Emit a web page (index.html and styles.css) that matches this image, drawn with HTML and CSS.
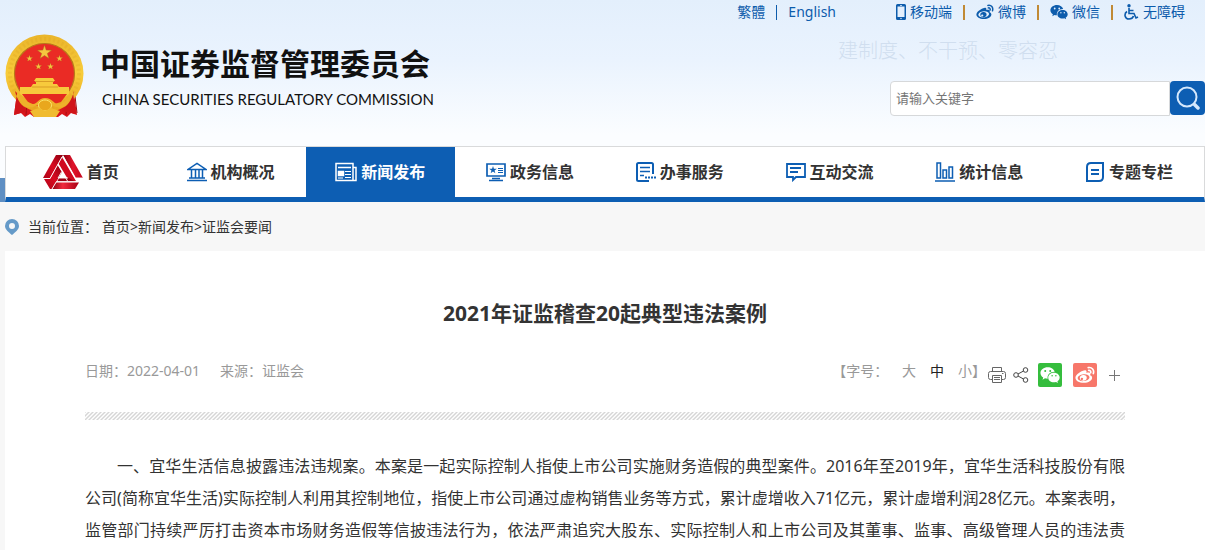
FILE: index.html
```html
<!DOCTYPE html>
<html lang="zh-CN">
<head>
<meta charset="utf-8">
<title>2021年证监稽查20起典型违法案例</title>
<link rel="stylesheet" href="styles.css">
</head>
<body>
<svg class="defs" aria-hidden="true">
  <symbol id="weibo" viewBox="0 0 18 16">
    <path fill="currentColor" fill-rule="evenodd" d="M7.2 4.2c1.200-.7 3-.9 3.200.8 0 .5-.2.900-.2 1.100 1.200-.5 3-.7 3.500.5.3.8-.1 1.400-.2 1.600 1 .3 1.900 1 1.900 2.200 0 2.300-3.300 4.600-7.500 4.600C3.700 15 .4 13.200.4 10.500c0-2.300 3.400-5.100 6.800-6.300zM7.800 7.300c-3.300.2-5.500 2-5.400 3.700.2 1.700 2.600 2.800 5.600 2.500 3-.3 5.200-2 5-3.700-.2-1.700-2.300-2.700-5.200-2.500zM7.300 8.100c1.800-.3 3.300.8 3.300 2.300s-1.400 2.800-3.200 2.800-3.100-1-3.100-2.500 1.300-2.400 3-2.600zM6.200 10.400a1.100 1.100 0 1 0 .1 2.200 1.100 1.100 0 0 0-.1-2.200z"/>
    <path fill="none" stroke="currentColor" stroke-width="1.500" stroke-linecap="round" d="M11.900 1.400c3.400-.7 5.600 2 4.600 5.300M12.300 3.900c1.400-.2 2.200.8 1.800 2.100"/>
  </symbol>
  <symbol id="wechat" viewBox="0 0 18 16">
    <path fill="currentColor" fill-rule="evenodd" d="M7 1C3.300 1 .4 3.300.4 6.200c0 1.700 1 3.100 2.500 4.100l-.6 1.900 2.200-1.200c.8.200 1.500.3 2.400.300C6.300 7.800 9 5 13.200 5.100 12.600 2.700 10 1 7 1zM4.700 3.600a.9.900 0 1 1 0 1.800.9.900 0 0 1 0-1.800zm4.500 0a.9.900 0 1 1 0 1.800.9.900 0 0 1 0-1.800z"/>
    <path fill="currentColor" fill-rule="evenodd" d="M12.600 5.900c3 0 5.100 2 5.100 4.300 0 1.400-.8 2.600-2 3.400l.4 1.600-1.700-.9c-4 1-7-1.200-7-4.100 0-2.400 2.300-4.300 5.200-4.300zM10.900 8a.7.700 0 1 0 0 1.400.7.700 0 0 0 0-1.400zm3.400 0a.7.700 0 1 0 0 1.400.7.700 0 0 0 0-1.400z"/>
  </symbol>
  <symbol id="star" viewBox="-10 -10 20 20"><path d="M0-10 2.300-3.200 9.500-3.100 3.800 1.200 5.900 8.100 0 4-5.900 8.100-3.800 1.200-9.500-3.100-2.300-3.200z"/></symbol>
</svg>

<header class="header">
  <div class="top-links">
    <div class="languages"><a href="#">繁體</a><i class="bar"></i><a href="#">English</a></div>
    <div class="services">
      <a href="#"><svg width="10" height="16" viewBox="0 0 10 16"><path fill="currentColor" fill-rule="evenodd" d="M1.500 0h7A1.500 1.500 0 0 1 10 1.500v13a1.500 1.500 0 0 1-1.500 1.500h-7A1.500 1.500 0 0 1 0 14.500v-13A1.500 1.500 0 0 1 1.500 0zM1.500 2.500v10.500h7V2.500zM4 1v.7h2V1zM5 13.800a.7.700 0 1 0 0 1.400.7.700 0 0 0 0-1.400z"/></svg>移动端</a>
      <i class="bar gold"></i>
      <a href="#"><svg width="18" height="16"><use href="#weibo"/></svg>微博</a>
      <i class="bar gold"></i>
      <a href="#"><svg width="18" height="16"><use href="#wechat"/></svg>微信</a>
      <i class="bar gold"></i>
      <a href="#"><svg width="15" height="16" viewBox="0 0 15 16"><circle cx="5" cy="1.800" r="1.700" fill="currentColor"/><path d="M5 4v5.500h5l2 4.500 2-1M5.500 6.500h4M3 7.500C-.5 10 1 15 5 15c2.300 0 4-1.300 4.500-3" fill="none" stroke="currentColor" stroke-width="1.600"/></svg>无障碍</a>
    </div>
  </div>
  <div class="masthead">
    <a class="brand" href="#">
      <svg class="emblem" width="80" height="84" viewBox="0 0 80 84" role="img" aria-label="国徽">
        <defs><linearGradient id="gold" x2="0" y2="1"><stop stop-color="#eab52b"/><stop offset=".5" stop-color="#f8cc3a"/><stop offset="1" stop-color="#e8a51e"/></linearGradient></defs>
        <path d="M12 59 9 81l7-2 4 4 5-3 4 3h24l4-3 5 3 4-4 6 2-3-22z" fill="#d9161c"/>
        <path d="M14 62 12 79M18 64l-1 14M22 67l-1 14M62 67l-1 14M66 64v14M70 62l2 17" stroke="#a60d12"/>
        <circle cx="39.500" cy="39.500" r="39" fill="url(#gold)"/>
        <circle cx="39.500" cy="39.500" r="34.500" fill="none" stroke="#d89a1c" stroke-width="4" stroke-dasharray="2 2.500" opacity=".22"/>
        <circle cx="39.500" cy="39.500" r="30" fill="#ea2b25" stroke="#b9781a" stroke-width="1.200"/>
        <g fill="#f5c640" stroke="#a8641c" stroke-width=".6"><use href="#star" x="32" y="11" width="15" height="15"/><use href="#star" x="21" y="21" width="7" height="7"/><use href="#star" x="51" y="21" width="7" height="7"/><use href="#star" x="30" y="29" width="7" height="7"/><use href="#star" x="42" y="29" width="7" height="7"/></g>
        <path d="M31 44h17l2 3h-2v3h4l2 3h10v7l-4 3H19l-4-3v-7h11l2-3h3v-3h-2z" fill="#f7ca3c"/>
        <path d="M27 53h26M30 47.500h19" stroke="#d99d25"/>
        <path d="M17 60h45l-6 8-10 3-6-3-8 4-9-4z" fill="#e52a20"/>
        <path d="M10 57c2 9 7 15 12 20l-13 4 3-22zM69 57c-2 9-7 15-12 20l14 3-3-21z" fill="#d0141a"/>
        <path d="M14 60c5 3 8 10 14 10 5 0 5-6 12-6 8 0 8 6 13 6 7 0 9-7 13-10l-1 6c-6 9-10 8-14 7-5-3-18-3-23 0-5 1-10 1-14-8z" fill="#eeb12a"/>
        <path d="M34 69c3-4 9-4 12 0 2 4-2 8-6 8s-8-4-6-8z" fill="#e9a71d" stroke="#fae36a"/>
        <path d="m25 77 9-3 6 3 6-3 9 3-4 6H29z" fill="#f0bb30"/>
      </svg>
      <span class="names"><strong>中国证券监督管理委员会</strong><span>CHINA SECURITIES REGULATORY COMMISSION</span></span>
    </a>
    <div class="search-side">
      <p class="slogan">建制度、不干预、零容忍</p>
      <form class="search">
        <input type="text" placeholder="请输入关键字" aria-label="请输入关键字">
        <button type="button" aria-label="搜索"><svg width="24" height="24" viewBox="0 0 24 24" fill="none" stroke="#d5e8fc" stroke-width="2"><circle cx="11" cy="11" r="9.500"/><path d="m18.500 18.500 3.500 3.500" stroke-width="3.500" stroke-linecap="round"/></svg></button>
      </form>
    </div>
  </div>
  <nav class="nav">
    <a href="#"><svg width="40" height="34" viewBox="0 0 40 34">
      <defs>
        <linearGradient id="left" x1="1" y1="0" x2="0" y2="1"><stop stop-color="#8d0010"/><stop offset=".5" stop-color="#d90a20"/><stop offset="1" stop-color="#b00418"/></linearGradient>
        <linearGradient id="right"><stop stop-color="#8d0010"/><stop offset=".5" stop-color="#e0142a"/><stop offset="1" stop-color="#c4061c"/></linearGradient>
        <linearGradient id="base"><stop stop-color="#8d0010"/><stop offset=".4" stop-color="#f02a3e"/><stop offset="1" stop-color="#a80014"/></linearGradient>
      </defs>
      <path d="M13 0h7L7 23H0z" fill="url(#left)"/>
      <path d="M20 0h7l13 23h-7z" fill="url(#right)"/>
      <path d="m19 2 14 24h-7L15.500 8.500z" fill="#d00a20"/>
      <path d="M14.500 10 19 17 9 34H7L1 24h6z" fill="url(#left)"/>
      <path d="M16 23h10l7 4h-19z" fill="#9c0012"/>
      <path d="M13 27.500h23L32 34H9z" fill="url(#base)"/>
      <path d="m20 1 14 25.500H13.500L9 34M0 23.500h7L19 2M15 9.500 24.500 26M18.500 17 15 23h10M40 23h-7" fill="none" stroke="#fff" stroke-width=".9"/>
    </svg>首页</a>
    <a href="#"><svg width="20" height="20" viewBox="0 0 20 20" fill="none" stroke="currentColor" stroke-width="1.500"><path d="M1 7.500h18L10 1.500zM0 18.500h20M2 16h16M4.500 7.500v8M8.500 7.500v8M12 7.500v8M15.500 7.500v8"/></svg>机构概况</a>
    <a class="active" href="#"><svg width="22" height="20" viewBox="0 0 22 20" fill="none" stroke="currentColor" stroke-width="1.500"><path d="M1 1.500h17v17H1zM18 5.500h3v13h-3M3 5.500h13"/><path d="M3.500 9.500h5v4h-5z" fill="currentColor"/><path d="M10 9.500h6M10 12.500h6M10 15.500h6M3 16h5" stroke-width="1"/></svg>新闻发布</a>
    <a href="#"><svg width="20" height="20" viewBox="0 0 20 20" fill="none" stroke="currentColor" stroke-width="1.700"><path d="M1 2h18v12H1zM6 16.500h8M3 18.500h14"/><use href="#star" x="3" y="4" width="8" height="8" fill="currentColor" stroke="none"/><path d="M12 6.500h5M12 8.500h5M12 10.500h5" stroke-width="1"/></svg>政务信息</a>
    <a href="#"><svg width="20" height="20" viewBox="0 0 20 20" fill="none" stroke="currentColor" stroke-width="2"><path d="M17 12V2.500Q17 1 15.500 1h-13Q1 1 1 2.500v15Q1 19 2.500 19H13"/><path d="M4 5.500h10M4 9.500h10M4 13.500h4" stroke-width="1.500"/><path d="M9 15.500h11" stroke-dasharray="2 1"/></svg>办事服务</a>
    <a href="#"><svg width="20" height="20" viewBox="0 0 20 20" fill="none" stroke="currentColor" stroke-width="1.800"><path d="M1 2h18v13h-9l-3 3v-3H1zM4 6h11M4 10h8"/></svg>互动交流</a>
    <a href="#"><svg width="20" height="20" viewBox="0 0 20 20" fill="none" stroke="currentColor" stroke-width="1.500"><path d="M0 19h20M2 1h3.500v15H2zM8 8h3.500v8H8zM14 5h3.500v11H14z"/></svg>统计信息</a>
    <a href="#"><svg width="20" height="22" viewBox="0 0 20 22" fill="none" stroke="currentColor" stroke-width="2"><path d="M6 2h12v14q0 4-4 4H2V6q0-4 4-4zM6 9h8M6 13h8"/></svg>专题专栏</a>
  </nav>
</header>

<main class="page">
  <div class="breadcrumb">
    <svg width="14" height="16" viewBox="0 0 14 16"><path fill="#659ac8" fill-rule="evenodd" d="M7 0a7 7 0 0 1 7 7c0 3.500-3.500 6-7 9-3.500-3-7-5.500-7-9a7 7 0 0 1 7-7zm0 4a3 3 0 1 0 0 6 3 3 0 0 0 0-6z"/></svg>
    <span class="here">当前位置：</span><a href="#">首页</a>&gt;<a href="#">新闻发布</a>&gt;<a href="#">证监会要闻</a>
  </div>
  <article class="article">
    <h1>2021年证监稽查20起典型违法案例</h1>
    <div class="meta">
      <span>日期：2022-04-01</span><span>来源：证监会</span>
      <div class="sizes">【字号： <button type="button">大</button><button type="button" class="current">中</button><button type="button" class="last">小</button>】</div>
      <div class="tools">
        <button type="button" aria-label="打印"><svg width="18" height="16" viewBox="0 0 18 16" fill="none" stroke="#666"><path d="M4.500 4.500v-4h9v4M4 12.500H2.500q-2 0-2-2v-4q0-2 2-2h13q2 0 2 2v4q0 2-2 2H14M4.500 8.500h9v7h-9zM6 10.500h6M6 12.500h6M14 6.500h1.500"/></svg></button>
        <button type="button" aria-label="分享"><svg width="16" height="16" viewBox="0 0 16 16" fill="none" stroke="#444"><circle cx="3" cy="8" r="2.300"/><circle cx="12.500" cy="3" r="2.300"/><circle cx="12.500" cy="13" r="2.300"/><path d="m5 7 5.500-3M5 9l5.500 3"/></svg></button>
        <button type="button" class="share green" aria-label="微信"><svg width="20" height="18"><use href="#wechat"/></svg></button>
        <button type="button" class="share red" aria-label="微博"><svg width="20" height="18"><use href="#weibo"/></svg></button>
        <button type="button" class="more" aria-label="更多"><svg width="11" height="11" viewBox="0 0 11 11"><path d="M5.500 0v11M0 5.500h11" stroke="#777"/></svg></button>
      </div>
    </div>
    <div class="hatch"></div>
    <p class="text">一、宜华生活信息披露违法违规案。本案是一起实际控制人指使上市公司实施财务造假的典型案件。2016年至2019年，宜华生活科技股份有限公司(简称宜华生活)实际控制人利用其控制地位，指使上市公司通过虚构销售业务等方式，累计虚增收入71亿元，累计虚增利润28亿元。本案表明，监管部门持续严厉打击资本市场财务造假等信披违法行为，依法严肃追究大股东、实际控制人和上市公司及其董事、监事、高级管理人员的违法责</p>
  </article>
</main>
</body>
</html>
```
FILE: styles.css
```css
* { box-sizing: border-box; }
body {
  margin: 0;
  min-height: 100vh;
  display: flex;
  flex-direction: column;
  background: #f7f7f7;
  color: #333;
  font: 14px/20px "Noto Sans", "Noto Sans CJK SC", sans-serif;
}
a { color: inherit; text-decoration: none; }
p, h1 { margin: 0; }
button { padding: 0; border: 0; background: none; color: inherit; font: inherit; cursor: pointer; }
svg { display: block; flex: none; }
.defs { position: absolute; width: 0; height: 0; }

.header {
  padding-left: 5px;
  background:
    linear-gradient(#5f8fc3, #5f8fc3) 0 100% / 5px 24px no-repeat,
    linear-gradient(#e3effc, #eaf3fe 60px, #fbfdff 135px);
}
.top-links {
  display: flex;
  justify-content: flex-end;
  gap: 60px;
  padding: 2px 20px 0 0;
  color: #0d5cac;
}
.languages, .services, .services a { display: flex; align-items: center; }
.languages, .services { gap: 11px; }
.services a { gap: 4px; }
.bar { width: 1px; height: 15px; background: #0d5cac; }
.bar.gold { width: 2px; background: #c08a35; }

.masthead { display: flex; justify-content: space-between; height: 124px; }
.brand { display: flex; gap: 15px; padding-top: 12px; color: #111; }
.names { display: flex; flex-direction: column; padding-top: 10px; }
.names strong { font-size: 30px; line-height: 40px; }
.names span { padding: 5px 2px; font-family: Lato, sans-serif; font-size: 15px; line-height: 20px; }
.search-side { width: 367px; padding-top: 14px; }
.slogan { color: #d0deef; font-size: 20px; font-weight: 300; line-height: 30px; }
.search { display: flex; margin: 15px 0 0 52px; }
.search input {
  flex: 1;
  min-width: 0;
  height: 35px;
  padding: 0 5px 2px;
  border: 1px solid #d6d8da;
  border-radius: 4px 0 0 4px;
  background: #fff;
  font: 13px "Noto Sans", "Noto Sans CJK SC", sans-serif;
}
.search input::placeholder { color: #757575; }
.search button {
  display: grid;
  place-items: center;
  width: 35px;
  height: 34px;
  border-radius: 4px;
  background: #0d5eb3;
}

.nav {
  display: grid;
  grid-template-columns: repeat(8, 1fr);
  border: 1px solid #d9dadb;
  border-bottom: 5px solid #0d5eb3;
  background: #fff;
}
.nav a {
  display: flex;
  align-items: center;
  justify-content: center;
  gap: 4px;
  height: 50px;
  font-size: 16px;
  font-weight: 700;
}
.nav svg { color: #0d5eb3; }
.nav .active { background: #0d5eb3; color: #fff; }
.nav .active svg { color: #fff; }

.page { flex: 1; display: flex; flex-direction: column; padding-left: 5px; }
.breadcrumb { display: flex; align-items: center; height: 49px; }
.here { margin: 0 4px 0 9px; }
.article { flex: 1; padding: 47px 80px 0; background: #fff; }
.article h1 { font-size: 21px; line-height: 30px; text-align: center; }
.meta { display: flex; align-items: flex-start; gap: 20px; margin-top: 33px; height: 28px; color: #999; }
.sizes { margin-left: auto; }
.sizes button { margin-right: 14px; }
.sizes button:first-child { margin-left: 10px; }
.sizes .current { color: #222; }
.sizes .last { margin-right: 0; }
.tools { display: flex; align-items: center; gap: 7px; margin-left: -18px; padding: 2px 5px 0 0; }
.share { display: grid; place-items: center; width: 24px; height: 24px; margin: 0 2px; border-radius: 2px; color: #fff; }
.green { background: #35bd3d; }
.red { background: #f7776a; }
.more { margin-left: 3px; }
.hatch {
  height: 8px;
  margin-top: 23px;
  background: linear-gradient(135deg, #d6d6d6 12%, #fff 13% 37%, #d6d6d6 38% 62%, #fff 63% 87%, #d6d6d6 88%) 0 0 / 4px 4px;
}
.text { margin-top: 30px; font-size: 16px; line-height: 32px; text-align: justify; text-align-last: justify; text-indent: 2em; }
```
